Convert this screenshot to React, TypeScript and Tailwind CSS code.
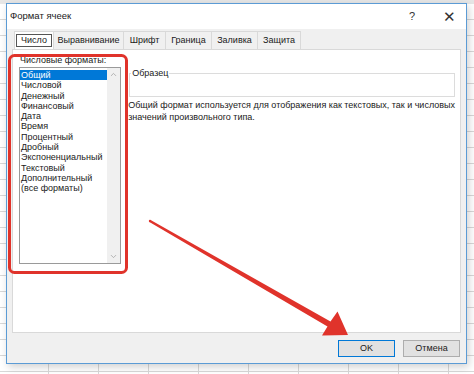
import { ChevronUp, ChevronDown } from "lucide-react";

const tabs = [
  { label: "Число", w: "w-[40px]" },
  { label: "Выравнивание", w: "w-[71px]" },
  { label: "Шрифт", w: "w-[43px]" },
  { label: "Граница", w: "w-[47px]" },
  { label: "Заливка", w: "w-[47px]" },
  { label: "Защита", w: "w-[44px]" },
];

const formats = [
  "Общий",
  "Числовой",
  "Денежный",
  "Финансовый",
  "Дата",
  "Время",
  "Процентный",
  "Дробный",
  "Экспоненциальный",
  "Текстовый",
  "Дополнительный",
  "(все форматы)",
];

function Overlay() {
  // red frame round the list and the arrow pointing at OK
  return (
    <svg className="pointer-events-none absolute left-0 top-0" width="474" height="374" viewBox="0 0 474 374">
      <rect x="9.5" y="55.5" width="117" height="217" rx="5" fill="none" stroke="#e0332b" strokeWidth="3" />
      <circle cx="150" cy="221" r="1.2" fill="#e0332b" />
      <polygon
        points="150.6,220 330.5,321.4 337.5,311.5 348,335 322,335.5 327.5,326.6 149.4,222"
        fill="#e0332b"
      />
    </svg>
  );
}

export default function App() {
  return (
    <div className="relative h-[374px] w-[474px] overflow-hidden bg-white bg-[linear-gradient(#d8d8d8_1px,transparent_1px),linear-gradient(90deg,#d8d8d8_1px,transparent_1px)] bg-size-[50px_16px] bg-position-[-2px_3px] font-['Liberation_Sans',sans-serif] text-[#1a1a1a]">
      {/* toolbar strip behind the window */}
      <div className="h-[4px] w-full bg-[#e6e6e6]" />

      <div className="absolute left-[6px] top-[3px] flex h-[361px] w-[461px] flex-col border border-[#5b9bd5] bg-[#f0f0f0] shadow-[2px_3px_8px_rgba(0,0,0,0.18)]">
        {/* title bar */}
        <div className="flex h-[25px] items-center bg-white pl-[3px] text-[9.5px]">
          <span>Формат ячеек</span>
          <span className="ml-auto mr-[28px] text-[11px] text-[#333]">?</span>
          <span className="mr-[10px] text-[15px] font-light leading-none text-[#333]">✕</span>
        </div>

        {/* tabs */}
        <div className="mt-[2px] flex h-[18px] pl-[7px] text-[9px]">
          {tabs.map((t, i) => (
            <div
              key={t.label}
              className={`flex ${t.w} items-center justify-center border border-b-0 border-[#d9d9d9] ${
                i === 0 ? "bg-white" : "-ml-px bg-[#f0f0f0]"
              }`}
            >
              {i === 0 ? (
                <span className="border border-[#555] bg-white px-[4px] leading-[11px]">{t.label}</span>
              ) : (
                t.label
              )}
            </div>
          ))}
        </div>

        {/* panel */}
        <div className="mx-[5px] flex h-[284px] border border-[#d9d9d9] bg-white pl-[6px] pt-[5px] text-[9px]">
          <div className="flex w-[103px] flex-col">
            <span className="pl-[1px] leading-[11px]">Числовые форматы:</span>
            <div className="mt-[1px] flex h-[197px] border border-[#9a9a9a]">
              <div className="flex flex-1 flex-col pt-[2px] leading-[10.3px]">
                {formats.map((f, i) => (
                  <span key={f} className={`pl-[1px] ${i === 0 ? "bg-[#0078d7] text-white" : ""}`}>
                    {f}
                  </span>
                ))}
              </div>
              <div className="flex w-[13px] flex-col items-center justify-between bg-[#f0f0f0] py-[2px] text-[#a0a0a0]">
                <ChevronUp size={9} strokeWidth={2} />
                <ChevronDown size={9} strokeWidth={2} />
              </div>
            </div>
          </div>

          <div className="ml-[8px] mr-[5px] flex flex-1 flex-col">
            <div className="relative mt-[18px] h-[24px] border border-[#dcdcdc]">
              <span className="absolute -top-[6px] left-[1px] bg-white px-[1px] leading-[11px]">Образец</span>
            </div>
            <p className="-ml-[1px] mt-[3px] whitespace-nowrap leading-[11.5px]">
              Общий формат используется для отображения как текстовых, так и числовых
              <br />
              значений произвольного типа.
            </p>
          </div>
        </div>

        {/* buttons */}
        <div className="flex flex-1 items-center justify-end gap-[8px] pr-[6px] pt-[1px] text-[9px]">
          <button className="flex h-[17px] w-[57px] items-center justify-center border border-[#0078d7] bg-[#e1e1e1]">
            OK
          </button>
          <button className="flex h-[17px] w-[57px] items-center justify-center border border-[#adadad] bg-[#e1e1e1]">
            Отмена
          </button>
        </div>
      </div>

      <Overlay />
    </div>
  );
}
